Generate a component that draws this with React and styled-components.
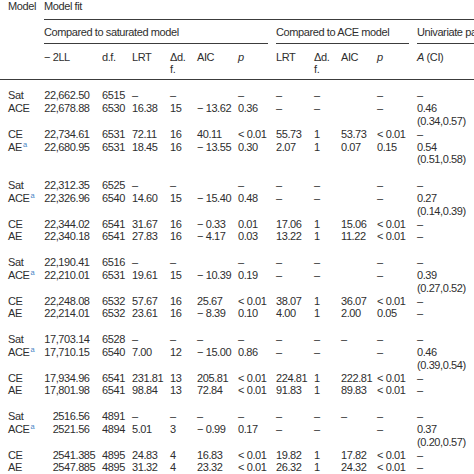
import styled, { createGlobalStyle } from 'styled-components';

const GlobalStyle = createGlobalStyle`
  html, body {
    margin: 0;
    padding: 0;
    background: #ffffff;
  }
  body {
    font-family: "Liberation Sans", Arial, sans-serif;
    color: #2e2e2e;
  }
`;

const Frame = styled.div`
  width: 474px;
  height: 474px;
  overflow: hidden;
`;

const Table = styled.table`
  border-collapse: collapse;
  table-layout: fixed;
  width: 627px;
  font-size: 11px;
  letter-spacing: -0.4px;
  line-height: 12.83px;
`;

const Col = styled.col`
  width: ${p => p.$w}px;
`;

const Th = styled.th`
  padding: ${p => p.$pad || '0'};
  padding-left: ${p => (p.$first ? '8px' : '0')};
  text-align: left;
  vertical-align: top;
  font-weight: normal;
  white-space: nowrap;
  border-bottom: ${p => (p.$rule ? '1px solid #3c3c3c' : 'none')};
`;

const GroupLabel = styled.div`
  padding-bottom: ${p => p.$pb}px;
  margin-right: ${p => p.$gap || 0}px;
  border-bottom: 1px solid #3c3c3c;
`;

const Row = styled.tr`
  & > td {
    padding-top: ${p => p.$top || 0}px;
  }
`;

const Td = styled.td`
  padding: 0;
  padding-left: ${p => (p.$first ? '8px' : '0')};
  text-align: left;
  vertical-align: top;
  white-space: nowrap;
`;

const IntPart = styled.span`
  display: inline-block;
  width: 31.5px;
  text-align: right;
`;

const Note = styled.sup`
  font-size: 7.5px;
  line-height: 0;
  vertical-align: 4px;
  color: #4a86c5;
  margin-left: 1px;
`;

const Italic = styled.i`
  font-style: italic;
`;

const Line = styled.div``;

const widths = [44, 58, 30, 38, 27, 41, 38, 38, 27, 36, 40, 70, 70, 70];

const D = '–';

const groups = [
  [
    ['Sat', '22,662.50', '6515', D, D, '', D, D, D, '', D, [D]],
    ['ACE', '22,678.88', '6530', '16.38', '15', '− 13.62', '0.36', D, D, '', D, ['0.46', '(0.34,0.57)']],
    ['CE', '22,734.61', '6531', '72.11', '16', '40.11', '< 0.01', '55.73', '1', '53.73', '< 0.01', [D]],
    ['AE*', '22,680.95', '6531', '18.45', '16', '− 13.55', '0.30', '2.07', '1', '0.07', '0.15', ['0.54', '(0.51,0.58)']],
  ],
  [
    ['Sat', '22,312.35', '6525', D, D, '', D, D, D, '', D, [D]],
    ['ACE*', '22,326.96', '6540', '14.60', '15', '− 15.40', '0.48', D, D, '', D, ['0.27', '(0.14,0.39)']],
    ['CE', '22,344.02', '6541', '31.67', '16', '− 0.33', '0.01', '17.06', '1', '15.06', '< 0.01', [D]],
    ['AE', '22,340.18', '6541', '27.83', '16', '− 4.17', '0.03', '13.22', '1', '11.22', '< 0.01', [D]],
  ],
  [
    ['Sat', '22,190.41', '6516', D, D, '', D, D, D, '', D, [D]],
    ['ACE*', '22,210.01', '6531', '19.61', '15', '− 10.39', '0.19', D, D, '', D, ['0.39', '(0.27,0.52)']],
    ['CE', '22,248.08', '6532', '57.67', '16', '25.67', '< 0.01', '38.07', '1', '36.07', '< 0.01', [D]],
    ['AE', '22,214.01', '6532', '23.61', '16', '− 8.39', '0.10', '4.00', '1', '2.00', '0.05', [D]],
  ],
  [
    ['Sat', '17,703.14', '6528', D, D, D, D, D, D, D, D, [D]],
    ['ACE*', '17,710.15', '6540', '7.00', '12', '− 15.00', '0.86', D, D, '', D, ['0.46', '(0.39,0.54)']],
    ['CE', '17,934.96', '6541', '231.81', '13', '205.81', '< 0.01', '224.81', '1', '222.81', '< 0.01', [D]],
    ['AE', '17,801.98', '6541', '98.84', '13', '72.84', '< 0.01', '91.83', '1', '89.83', '< 0.01', [D]],
  ],
  [
    ['Sat', '2516.56', '4891', D, D, D, D, D, D, D, D, [D]],
    ['ACE*', '2521.56', '4894', '5.01', '3', '− 0.99', '0.17', D, D, '', D, ['0.37', '(0.20,0.57)']],
    ['CE', '2541.385', '4895', '24.83', '4', '16.83', '< 0.01', '19.82', '1', '17.82', '< 0.01', [D]],
    ['AE', '2547.885', '4895', '31.32', '4', '23.32', '< 0.01', '26.32', '1', '24.32', '< 0.01', [D]],
  ],
];

function ModelName({ name }) {
  const marked = name.endsWith('*');
  return (
    <>
      {marked ? name.slice(0, -1) : name}
      {marked && <Note>a</Note>}
    </>
  );
}

function Decimal({ value }) {
  const [int, frac] = value.split('.');
  return (
    <>
      <IntPart>{int}</IntPart>.{frac}
    </>
  );
}

function DataRow({ row, top }) {
  const [name, ll, ...rest] = row;
  const ci = rest[rest.length - 1];
  const cells = rest.slice(0, -1);
  return (
    <Row $top={top}>
      <Td $first>
        <ModelName name={name} />
      </Td>
      <Td>
        <Decimal value={ll} />
      </Td>
      {cells.map((c, i) => (
        <Td key={i}>{c}</Td>
      ))}
      <Td>
        {ci.map((l, i) => (
          <Line key={i}>{l}</Line>
        ))}
      </Td>
      <Td />
      <Td />
    </Row>
  );
}

export default function App() {
  return (
    <Frame>
      <GlobalStyle />
      <Table>
        <colgroup>
          {widths.map((w, i) => (
            <Col key={i} $w={w} />
          ))}
        </colgroup>
        <thead>
          <tr>
            <Th $first>Model</Th>
            <Th colSpan={13}>
              <GroupLabel $pb={6}>Model fit</GroupLabel>
            </Th>
          </tr>
          <tr>
            <Th $first />
            <Th colSpan={6} $pad="6px 0 0">
              <GroupLabel $pb={4} $gap={8}>Compared to saturated model</GroupLabel>
            </Th>
            <Th colSpan={4} $pad="6px 0 0">
              <GroupLabel $pb={4} $gap={8}>Compared to ACE model</GroupLabel>
            </Th>
            <Th colSpan={3} $pad="6px 0 0">
              <GroupLabel $pb={4}>Univariate parameter estimates</GroupLabel>
            </Th>
          </tr>
          <tr>
            <Th $first $rule $pad="7px 0 3px" />
            <Th $rule $pad="7px 0 3px">− 2LL</Th>
            <Th $rule $pad="7px 0 3px">d.f.</Th>
            <Th $rule $pad="7px 0 3px">LRT</Th>
            <Th $rule $pad="7px 0 3px">
              Δd.
              <br />
              f.
            </Th>
            <Th $rule $pad="7px 0 3px">AIC</Th>
            <Th $rule $pad="7px 0 3px">
              <Italic>p</Italic>
            </Th>
            <Th $rule $pad="7px 0 3px">LRT</Th>
            <Th $rule $pad="7px 0 3px">
              Δd.
              <br />
              f.
            </Th>
            <Th $rule $pad="7px 0 3px">AIC</Th>
            <Th $rule $pad="7px 0 3px">
              <Italic>p</Italic>
            </Th>
            <Th $rule $pad="7px 0 3px">
              <Italic>A</Italic> (CI)
            </Th>
            <Th $rule $pad="7px 0 3px">
              <Italic>C</Italic> (CI)
            </Th>
            <Th $rule $pad="7px 0 3px">
              <Italic>E</Italic> (CI)
            </Th>
          </tr>
        </thead>
        <tbody>
          {groups.map((g, gi) =>
            g.map((row, ri) => (
              <DataRow
                key={`${gi}-${ri}`}
                row={row}
                top={ri === 0 ? (gi === 0 ? 9 : 12.83) : 0}
              />
            ))
          )}
        </tbody>
      </Table>
    </Frame>
  );
}
